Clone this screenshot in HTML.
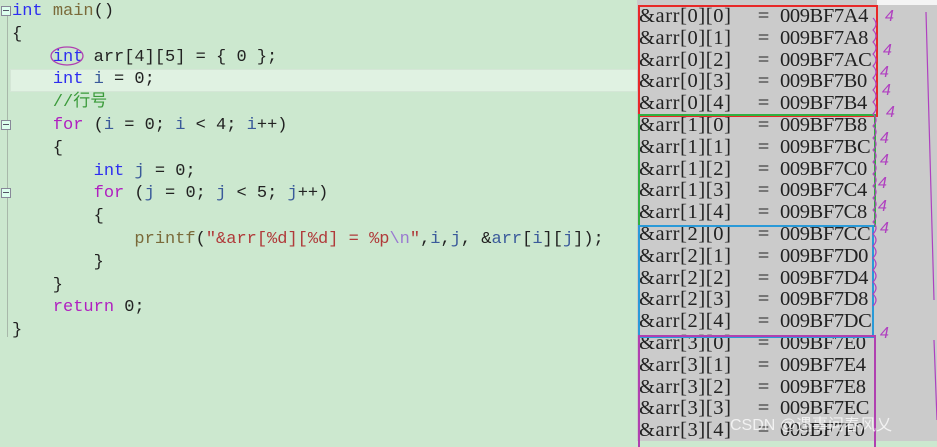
<!DOCTYPE html>
<html><head><meta charset="utf-8"><style>
body{margin:0;width:937px;height:441px;overflow:hidden;background:#cce8cf;position:relative;font-family:"Liberation Mono","Noto Sans CJK SC",monospace}
.code{position:absolute;left:12px;top:1px;font-size:17px;line-height:22.8px;white-space:pre;color:#222}
.k{color:#2d2df0}.f{color:#7a6a3a}.c{color:#3a9a3a}.p{color:#b020c0}.v{color:#3a5a9a}.s{color:#b03a3a}.e{color:#9a7ad0}
.hl{position:absolute;left:10px;top:69px;width:627px;height:21px;background:#e0f2e2;border:1px solid #d4e6d6}
.gut{position:absolute;left:7px;top:10px;width:1px;height:327px;background:#a8b8aa}
.m{position:absolute;left:1px;width:8px;height:8px;border:1px solid #889;background:#dfe;font-size:0}
.m:after{content:"";position:absolute;left:1px;top:3px;width:6px;height:1px;background:#556}
.con{position:absolute;left:637px;top:0;width:300px;height:441px;background:#cbcbcb}
.top{position:absolute;left:877px;top:0;width:60px;height:5px;background:#f4f4f4}
.out{position:absolute;left:639px;top:6px;font-family:"Liberation Serif","Noto Serif CJK SC",serif;font-size:20.5px;line-height:21.8px;white-space:nowrap;color:#222}
.out div{height:21.8px}
.out b{font-weight:normal;display:inline-block;width:108px;letter-spacing:0.6px}
.out i{font-style:normal;display:inline-block;width:33px;text-align:center}
.out u{text-decoration:none;letter-spacing:-0.4px}
.box{position:absolute;left:638px;width:236px;border:2px solid}
.wm{position:absolute;left:730px;top:411px;font-family:"Liberation Sans","Noto Sans CJK SC",sans-serif;font-size:16px;color:rgba(255,255,255,.75)}
.h{position:absolute;font-family:"Liberation Sans",sans-serif;color:#b040c0;font-size:16px;font-style:italic}
</style></head><body>
<div class="hl"></div>
<div class="gut"></div>
<div class="m" style="top:6px"></div><div class="m" style="top:120px"></div><div class="m" style="top:188px"></div>
<div class="code"><span class="k">int</span> <span class="f">main</span>()
{
    <span class="k">int</span> arr[4][5] = { 0 };
    <span class="k">int</span> <span class="v">i</span> = 0;
    <span class="c">//行号</span>
    <span class="p">for</span> (<span class="v">i</span> = 0; <span class="v">i</span> &lt; 4; <span class="v">i</span>++)
    {
        <span class="k">int</span> <span class="v">j</span> = 0;
        <span class="p">for</span> (<span class="v">j</span> = 0; <span class="v">j</span> &lt; 5; <span class="v">j</span>++)
        {
            <span class="f">printf</span>(<span class="s">"&amp;arr[%d][%d] = %p</span><span class="e">\n</span><span class="s">"</span>,<span class="v">i</span>,<span class="v">j</span>, &amp;<span class="v">arr</span>[<span class="v">i</span>][<span class="v">j</span>]);
        }
    }
    <span class="p">return</span> 0;
}</div>
<svg style="position:absolute;left:48px;top:44px" width="40" height="24"><ellipse cx="19" cy="12" rx="16" ry="9" fill="none" stroke="#b040b0" stroke-width="1.3"/></svg>
<div class="con"></div><div class="top"></div>
<div class="out"><div><b>&amp;arr[0][0]</b><i>=</i><u>009BF7A4</u></div><div><b>&amp;arr[0][1]</b><i>=</i><u>009BF7A8</u></div><div><b>&amp;arr[0][2]</b><i>=</i><u>009BF7AC</u></div><div><b>&amp;arr[0][3]</b><i>=</i><u>009BF7B0</u></div><div><b>&amp;arr[0][4]</b><i>=</i><u>009BF7B4</u></div><div><b>&amp;arr[1][0]</b><i>=</i><u>009BF7B8</u></div><div><b>&amp;arr[1][1]</b><i>=</i><u>009BF7BC</u></div><div><b>&amp;arr[1][2]</b><i>=</i><u>009BF7C0</u></div><div><b>&amp;arr[1][3]</b><i>=</i><u>009BF7C4</u></div><div><b>&amp;arr[1][4]</b><i>=</i><u>009BF7C8</u></div><div><b>&amp;arr[2][0]</b><i>=</i><u>009BF7CC</u></div><div><b>&amp;arr[2][1]</b><i>=</i><u>009BF7D0</u></div><div><b>&amp;arr[2][2]</b><i>=</i><u>009BF7D4</u></div><div><b>&amp;arr[2][3]</b><i>=</i><u>009BF7D8</u></div><div><b>&amp;arr[2][4]</b><i>=</i><u>009BF7DC</u></div><div><b>&amp;arr[3][0]</b><i>=</i><u>009BF7E0</u></div><div><b>&amp;arr[3][1]</b><i>=</i><u>009BF7E4</u></div><div><b>&amp;arr[3][2]</b><i>=</i><u>009BF7E8</u></div><div><b>&amp;arr[3][3]</b><i>=</i><u>009BF7EC</u></div><div><b>&amp;arr[3][4]</b><i>=</i><u>009BF7F0</u></div></div>
<div class="box" style="top:5px;height:108px;border-color:#e82828"></div>
<div class="box" style="top:114px;height:109px;border-color:#30b040;width:234px"></div>
<div class="box" style="top:225px;height:109px;border-color:#2a9ad8;width:232px"></div>
<div class="box" style="top:335px;height:110px;border-color:#b040b0;width:234px;border-bottom:none"></div>
<svg style="position:absolute;left:868px;top:0" width="69" height="441"><path d="M5 18 q6 6 0 12 q6 6 0 12 q6 6 0 12 q6 6 0 12 q6 6 0 12 q6 6 0 12 q6 6 0 12 q6 6 0 12 q6 6 0 12 q6 6 0 12 q6 6 0 12 q6 6 0 12 q6 6 0 12 q6 6 0 12 q6 6 0 12 q6 6 0 12 q6 6 0 12 q6 6 0 12 q6 6 0 12 q6 6 0 12 q6 6 0 12 q6 6 0 12 q6 6 0 12 q6 6 0 12" fill="none" stroke="#b040c0" stroke-width="1.2"/><path d="M58 12 L66 300 M66 340 L69 420" stroke="#b040c0" stroke-width="1.2"/></svg>
<div class="h" style="left:885px;top:8px">4</div>
<div class="h" style="left:883px;top:42px">4</div>
<div class="h" style="left:880px;top:64px">4</div>
<div class="h" style="left:882px;top:82px">4</div>
<div class="h" style="left:886px;top:104px">4</div>
<div class="h" style="left:880px;top:130px">4</div>
<div class="h" style="left:880px;top:152px">4</div>
<div class="h" style="left:878px;top:175px">4</div>
<div class="h" style="left:878px;top:198px">4</div>
<div class="h" style="left:880px;top:220px">4</div>
<div class="h" style="left:880px;top:325px">4</div>
<div class="wm">CSDN @遇事问春风乂</div>
</body></html>
